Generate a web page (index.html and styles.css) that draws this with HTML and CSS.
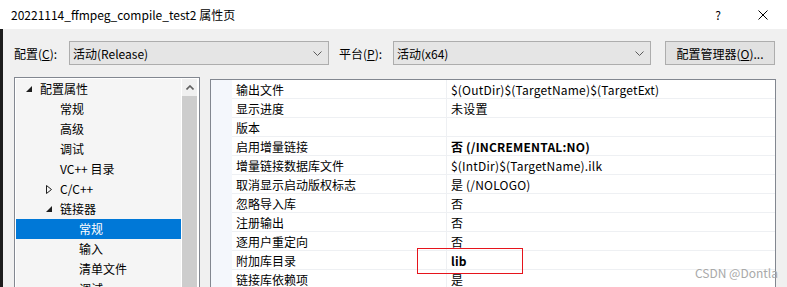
FILE: index.html
```html
<!DOCTYPE html>
<html lang="zh-CN">
<head>
    <meta charset="UTF-8">
    <meta name="viewport" content="width=device-width, initial-scale=1.0">
    <title>属性页</title>
    <link rel="stylesheet" href="styles.css">
</head>
<body>
    <div class="window">
        <div class="titlebar">
            <span class="title">20221114_ffmpeg_compile_test2 属性页</span>
            <span class="help">?</span>
            <svg class="close" width="10" height="10" viewBox="0 0 10 10"><path d="M0.5 0.5L9.5 9.5M9.5 0.5L0.5 9.5" stroke="#000" stroke-width="1"/></svg>
        </div>
        <div class="frame">
            <div class="edge"></div>
            <div class="content">
                <div class="toolbar">
                    <span class="label label-config">配置(<u>C</u>):</span>
                    <div class="combo combo-config">
                        <span class="combo-text">活动(Release)</span>
                        <svg class="chevron" width="9" height="5" viewBox="0 0 9 5"><polyline points="0.5,0.5 4.5,4.5 8.5,0.5" fill="none" stroke="#5a5a5a"/></svg>
                    </div>
                    <span class="label label-platform">平台(<u>P</u>):</span>
                    <div class="combo combo-platform">
                        <span class="combo-text">活动(x64)</span>
                        <svg class="chevron" width="9" height="5" viewBox="0 0 9 5"><polyline points="0.5,0.5 4.5,4.5 8.5,0.5" fill="none" stroke="#5a5a5a"/></svg>
                    </div>
                    <button class="btn">配置管理器(<u>O</u>)...</button>
                </div>

                <div class="panels">
                    <div class="tree">
                        <div class="tree-list">
                            <div class="node l0"><span class="exp"><svg width="6" height="6" viewBox="0 0 6 6"><polygon points="6,0 6,6 0,6" fill="#1e1e1e"/></svg></span>配置属性</div>
                            <div class="node l1"><span class="exp"></span>常规</div>
                            <div class="node l1"><span class="exp"></span>高级</div>
                            <div class="node l1"><span class="exp"></span>调试</div>
                            <div class="node l1"><span class="exp"></span>VC++ 目录</div>
                            <div class="node l1"><span class="exp"><svg width="6" height="9" viewBox="0 0 6 9"><polygon points="0.5,0.5 5.5,4.5 0.5,8.5" fill="none" stroke="#1e1e1e"/></svg></span>C/C++</div>
                            <div class="node l1"><span class="exp"><svg width="6" height="6" viewBox="0 0 6 6"><polygon points="6,0 6,6 0,6" fill="#1e1e1e"/></svg></span>链接器</div>
                            <div class="node l2 selected"><span class="exp"></span>常规</div>
                            <div class="node l2"><span class="exp"></span>输入</div>
                            <div class="node l2"><span class="exp"></span>清单文件</div>
                            <div class="node l2"><span class="exp"></span>调试</div>
                        </div>
                        <div class="scrollbar">
                            <div class="scroll-up"><svg width="8" height="5" viewBox="0 0 8 5"><polyline points="0.5,4.5 4,1 7.5,4.5" fill="none" stroke="#606060" stroke-width="1.6"/></svg></div>
                            <div class="scroll-thumb"></div>
                        </div>
                    </div>

                    <div class="grid">
                        <div class="row"><div class="name">输出文件</div><div class="value">$(OutDir)$(TargetName)$(TargetExt)</div></div>
                        <div class="row"><div class="name">显示进度</div><div class="value">未设置</div></div>
                        <div class="row"><div class="name">版本</div><div class="value"></div></div>
                        <div class="row"><div class="name">启用增量链接</div><div class="value bold">否 (/INCREMENTAL:NO)</div></div>
                        <div class="row"><div class="name">增量链接数据库文件</div><div class="value">$(IntDir)$(TargetName).ilk</div></div>
                        <div class="row"><div class="name">取消显示启动版权标志</div><div class="value">是 (/NOLOGO)</div></div>
                        <div class="row"><div class="name">忽略导入库</div><div class="value">否</div></div>
                        <div class="row"><div class="name">注册输出</div><div class="value">否</div></div>
                        <div class="row"><div class="name">逐用户重定向</div><div class="value">否</div></div>
                        <div class="row"><div class="name">附加库目录</div><div class="value bold">lib</div></div>
                        <div class="row"><div class="name">链接库依赖项</div><div class="value">是</div></div>
                    </div>
                </div>
            </div>
        </div>

        <div class="mark-box"></div>
        <div class="watermark">CSDN @Dontla</div>
    </div>
</body>
</html>
```

FILE: styles.css
```css
body { margin: 0; font-family: "Noto Sans CJK SC", sans-serif; font-size: 12px; color: #000; }
.window { position: relative; width: 787px; height: 287px; overflow: hidden; background: #f0f0f0; display: flex; flex-direction: column; }

.titlebar { height: 29px; flex-shrink: 0; background: #fff; display: flex; align-items: center; padding-left: 11px; }
.title { flex: 1; }
.help { margin-right: 37px; }
.close { margin-right: 19px; }

.frame { flex: 1; display: flex; }
.edge { width: 3px; background: #1c1c1c; }
.content { flex: 1; padding: 12px 0 0 11px; }

.toolbar { display: flex; align-items: center; height: 24px; }
.label { white-space: nowrap; }
.label-config { width: 55px; }
.label-platform { width: 54px; margin-left: 10px; }
.combo { box-sizing: border-box; height: 24px; border: 1px solid #adadad; background: #e5e5e5; display: flex; align-items: center; padding: 0 6px 0 3px; }
.combo-text { flex: 1; }
.combo-config { width: 260px; }
.combo-platform { width: 258px; }
.btn { box-sizing: border-box; width: 110px; height: 24px; margin-left: 14px; border: 1px solid #adadad; background: #e1e1e1; font: inherit; color: #000; padding: 0; }

.panels { display: flex; align-items: flex-start; margin-top: 12px; }

.tree { box-sizing: border-box; width: 186px; height: 230px; border: 1px solid #828790; background: #fff; display: flex; padding: 1px 1px 0 1px; }
.tree-list { flex: 1; background: #f5f5f5; }
.node { height: 20px; line-height: 20px; display: flex; align-items: center; white-space: nowrap; }
.node.l0 { padding-left: 10px; }
.node.l1 { padding-left: 30px; }
.node.l2 { padding-left: 49px; }
.node.selected { background: #0078d7; color: #fff; }
.exp { width: 14px; flex-shrink: 0; display: flex; align-items: center; }
.scrollbar { width: 15px; margin-left: 1px; margin-right: 1px; background: #f0f0f0; display: flex; flex-direction: column; }
.scroll-up { height: 17px; display: flex; align-items: center; justify-content: center; }
.scroll-thumb { flex: 1; background: #cdcdcd; }

.grid { box-sizing: border-box; width: 566px; height: 230px; margin-left: 10px; margin-top: 2px; border: 1px solid #828790; background: #f4f7fc; padding-left: 21px; }
.row { display: flex; height: 19px; box-sizing: border-box; border-bottom: 1px solid #eef0f3; background: #fff; line-height: 18px; padding-top: 1px; }
.name { box-sizing: border-box; width: 215px; padding-left: 4px; border-right: 1px solid #eef0f3; white-space: nowrap; margin-top: -1px; padding-top: 1px; }
.value { flex: 1; padding-left: 4px; white-space: nowrap; letter-spacing: 0.2px; }
.bold { font-weight: bold; }

.mark-box { position: absolute; left: 417px; top: 248px; width: 106px; height: 26px; box-sizing: border-box; border: 1px solid #e6141c; }
.watermark { position: absolute; left: 695px; top: 264px; color: #a9a9a9; font-size: 12px; }
```
